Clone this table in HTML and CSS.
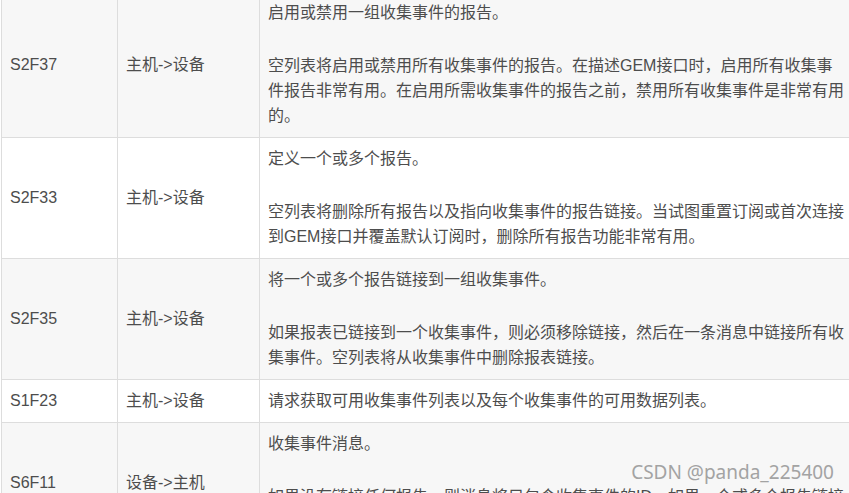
FILE: index.html
```html
<!DOCTYPE html>
<html lang="zh-CN">
<head>
    <meta charset="UTF-8">
    <meta name="viewport" content="width=device-width, initial-scale=1.0">
    <title>GEM 收集事件消息</title>
    <link rel="stylesheet" href="styles.css">
</head>
<body>
    <div class="page">
        <table class="msg-table">
            <colgroup>
                <col class="col-id">
                <col class="col-dir">
                <col class="col-desc">
            </colgroup>
            <tbody>
                <tr>
                    <td>S2F37</td>
                    <td>主机-&gt;设备</td>
                    <td>
                        <p>启用或禁用一组收集事件的报告。</p>
                        <p>空列表将启用或禁用所有收集事件的报告。在描述GEM接口时，启用所有收集事件报告非常有用。在启用所需收集事件的报告之前，禁用所有收集事件是非常有用的。</p>
                    </td>
                </tr>
                <tr>
                    <td>S2F33</td>
                    <td>主机-&gt;设备</td>
                    <td>
                        <p>定义一个或多个报告。</p>
                        <p>空列表将删除所有报告以及指向收集事件的报告链接。当试图重置订阅或首次连接到GEM接口并覆盖默认订阅时，删除所有报告功能非常有用。</p>
                    </td>
                </tr>
                <tr>
                    <td>S2F35</td>
                    <td>主机-&gt;设备</td>
                    <td>
                        <p>将一个或多个报告链接到一组收集事件。</p>
                        <p>如果报表已链接到一个收集事件，则必须移除链接，然后在一条消息中链接所有收集事件。空列表将从收集事件中删除报表链接。</p>
                    </td>
                </tr>
                <tr>
                    <td>S1F23</td>
                    <td>主机-&gt;设备</td>
                    <td>
                        <p>请求获取可用收集事件列表以及每个收集事件的可用数据列表。</p>
                    </td>
                </tr>
                <tr>
                    <td>S6F11</td>
                    <td>设备-&gt;主机</td>
                    <td>
                        <p>收集事件消息。</p>
                        <p>如果没有链接任何报告，则消息将只包含收集事件的ID。如果一个或多个报告链接到收集事件，则消息将包含报告数据。</p>
                    </td>
                </tr>
            </tbody>
        </table>

        <!-- watermark from the blog page -->
        <div class="watermark">CSDN @panda_225400</div>
    </div>
</body>
</html>
```

FILE: styles.css
```css
html, body {
    margin: 0;
    padding: 0;
    background: #ffffff;
}

.page {
    position: relative;
    height: 493px;
    overflow: hidden;
    padding-left: 1px;
}

.msg-table {
    border-collapse: collapse;
    table-layout: fixed;
    width: 853px;
    margin-top: -9px;
    font-family: "Liberation Sans", "Noto Sans CJK SC", sans-serif;
    font-size: 16px;
    line-height: 25px;
    color: #4d4d4d;
}

.col-id {
    width: 116px;
}

.col-dir {
    width: 142px;
}

.msg-table td {
    border: 1px solid #dddddd;
    padding: 8px 8px 9px;
    vertical-align: middle;
}

.msg-table tr:nth-child(odd) td {
    background: #f7f7f7;
}

.msg-table p {
    margin: 0;
}

.msg-table p + p {
    margin-top: 28px;
}

.watermark {
    position: absolute;
    right: 15px;
    top: 459px;
    font-family: "Noto Sans", "Open Sans", sans-serif;
    font-size: 19px;
    line-height: 26px;
    color: #a3a3a3;
}
```
